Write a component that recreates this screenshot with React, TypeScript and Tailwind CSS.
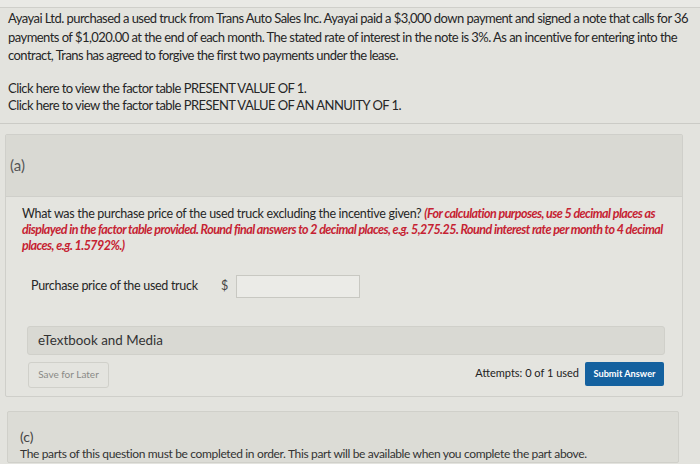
export default function App() {
  return (
    <div className="relative h-[464px] w-[700px] overflow-hidden bg-[#e3e3de] font-['Lato',sans-serif] text-[#262626]">
      <div className="h-[8px] border-b border-[#cfcfca] bg-[#e9e9e5]" />

      <div className="px-[8px] pt-[1px] text-[13px] leading-[18.5px] tracking-[-0.55px] whitespace-nowrap">
        <p>
          Ayayai Ltd. purchased a used truck from Trans Auto Sales Inc. Ayayai paid a $3,000 down payment and signed a note that calls for 36
          <br />
          payments of $1,020.00 at the end of each month. The stated rate of interest in the note is 3%. As an incentive for entering into the
          <br />
          contract, Trans has agreed to forgive the first two payments under the lease.
        </p>
        <div className="mt-[15px] leading-[17px]">
          <p>Click here to view the factor table PRESENT VALUE OF 1.</p>
          <p>Click here to view the factor table PRESENT VALUE OF AN ANNUITY OF 1.</p>
        </div>
      </div>

      <div className="mt-[9px] border-b border-[#cbcbc6]" />

      <div className="ml-[5px] mt-[10px] w-[678px] rounded-[2px] border border-[#cfcfca] bg-[#e4e4df]">
        <div className="flex h-[62px] items-center border-b border-[#cfcfca] bg-[#d9d9d3] px-[4px] text-[15px] text-[#555]">
          (a)
        </div>
        <div className="px-[16px] pt-[9px] pb-[8px]">
          <p className="whitespace-nowrap text-[12.5px] leading-[16px] tracking-[-0.3px]">
            What was the purchase price of the used truck excluding the incentive given?{' '}
            <span className="font-bold italic tracking-[-0.55px] text-[#c62232]">
              (For calculation purposes, use 5 decimal places as
              <br />
              displayed in the factor table provided. Round final answers to 2 decimal places, e.g. 5,275.25. Round interest rate per month to 4 decimal
              <br />
              places, e.g. 1.5792%.)
            </span>
          </p>

          <div className="mt-[21px] ml-[9px] flex items-center text-[12.5px] tracking-[-0.3px]">
            <span className="w-[190px]">Purchase price of the used truck</span>
            <span className="w-[15px] text-[#444]">$</span>
            <div className="h-[23px] w-[124px] border border-[#c8c8c2] bg-[#ebebe7]" />
          </div>

          <div className="mt-[28px] ml-[5px] flex h-[29px] w-[638px] items-center rounded-[3px] border border-[#d0d0ca] bg-[#d9d9d3] px-[10px] text-[13.4px] text-[#333]">
            eTextbook and Media
          </div>

          <div className="mt-[7px] ml-[6px] flex w-[636px] items-start justify-between">
            <button className="h-[26px] w-[81px] rounded-[3px] border border-[#d0d0ca] bg-[#e4e4df] text-[10px] text-[#8a8a86]">
              Save for Later
            </button>
            <div className="flex items-center gap-[6px]">
              <span className="text-[11px] text-[#222]">Attempts: 0 of 1 used</span>
              <button className="h-[24px] w-[79px] rounded-[2px] bg-[#14619f] text-[9.2px] font-bold text-white">
                Submit Answer
              </button>
            </div>
          </div>
        </div>
      </div>

      <div className="ml-[7px] mt-[14px] w-[672px] rounded-[2px] border border-[#d0d0ca] bg-[#dcdcd6] px-[12px] pt-[16px]">
        <p className="text-[14px] leading-[18px] text-[#444]">(c)</p>
        <p className="whitespace-nowrap text-[12px] leading-[16px] tracking-[-0.35px] text-[#333]">
          The parts of this question must be completed in order. This part will be available when you complete the part above.
        </p>
      </div>
    </div>
  );
}
